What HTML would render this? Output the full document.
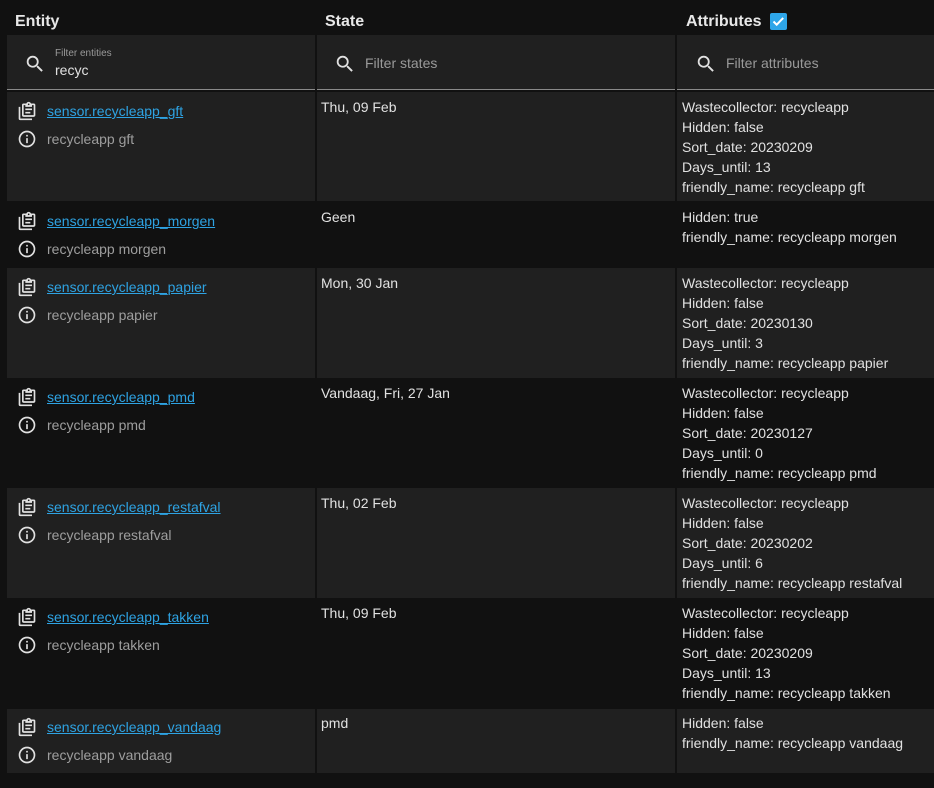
<!DOCTYPE html>
<html><head><meta charset="utf-8"><style>
*{margin:0;padding:0;box-sizing:border-box}
body{width:934px;height:788px;background:#111111;font-family:"Liberation Sans",Roboto,sans-serif;color:#e1e1e1;font-size:14px;position:relative;overflow:hidden}
.h{position:absolute;top:13px;font-weight:bold;font-size:16px;color:#e8e8e8}
.c{position:absolute}
.g{background:#202020}
.fl{position:absolute;top:35px;height:55px;background:#202020;border-bottom:1px solid #8a8a8a}
.ph{position:absolute;top:55px;color:#9a9a9a;font-size:14px}
.si{position:absolute;top:53px}
a{color:#2ea3e3;text-decoration:underline}
.lk{position:absolute;left:47px;font-size:14px}
.sec{position:absolute;left:47px;color:#9e9e9e;font-size:14px}
.st{position:absolute;left:321px;font-size:14px}
.at{position:absolute;left:682px;font-size:14px;line-height:20px}
.ic{position:absolute;left:17px}
</style></head><body>
<div class="h" style="left:15px">Entity</div>
<div class="h" style="left:325px">State</div>
<div class="h" style="left:686px">Attributes</div>
<div style="position:absolute;left:770px;top:13px;width:17px;height:17px;background:#2ea6e9;border-radius:2px"><svg width="17" height="17" viewBox="0 0 17 17"><path d="M3.5 8.5l3.2 3.2 6.5-6.8" stroke="#fff" stroke-width="2" fill="none"/></svg></div>

<div class="fl" style="left:7px;width:308px"></div>
<div class="fl" style="left:317px;width:358px"></div>
<div class="fl" style="left:677px;width:257px"></div>
<svg class="si" style="left:24px" width="22" height="22" viewBox="0 0 24 24"><path fill="#e1e1e1" d="M9.5 3A6.5 6.5 0 0 1 16 9.5c0 1.61-.59 3.09-1.56 4.23l.27.27h.79l5 5-1.5 1.5-5-5v-.79l-.27-.27A6.52 6.52 0 0 1 9.5 16 6.5 6.5 0 0 1 3 9.5 6.5 6.5 0 0 1 9.5 3m0 2C7 5 5 7 5 9.5S7 14 9.5 14 14 12 14 9.5 12 5 9.5 5z"/></svg>
<svg class="si" style="left:334px" width="22" height="22" viewBox="0 0 24 24"><path fill="#e1e1e1" d="M9.5 3A6.5 6.5 0 0 1 16 9.5c0 1.61-.59 3.09-1.56 4.230l.27.27h.79l5 5-1.5 1.5-5-5v-.79l-.27-.27A6.52 6.520 0 0 1 9.5 16 6.5 6.5 0 0 1 3 9.5 6.5 6.5 0 0 1 9.5 3m0 2C7 5 5 7 5 9.5S7 14 9.5 14 14 12 14 9.5 12 5 9.5 5z"/></svg>
<svg class="si" style="left:695px" width="22" height="22" viewBox="0 0 24 24"><path fill="#e1e1e1" d="M9.5 3A6.5 6.5 0 0 1 16 9.5c0 1.61-.59 3.09-1.56 4.23l.27.27h.79l5 5-1.5 1.5-5-5v-.79l-.27-.27A6.52 6.52 0 0 1 9.5 16 6.5 6.5 0 0 1 3 9.5 6.5 6.5 0 0 1 9.5 3m0 2C7 5 5 7 5 9.5S7 14 9.5 14 14 12 14 9.5 12 5 9.5 5z"/></svg>
<div style="position:absolute;left:55px;top:48px;font-size:10px;color:#9a9a9a">Filter entities</div>
<div style="position:absolute;left:55px;top:62px;font-size:14px;color:#e1e1e1">recyc</div>
<div class="ph" style="left:365px">Filter states</div>
<div class="ph" style="left:726px">Filter attributes</div>

<!-- gray rows backgrounds -->
<div class="c g" style="left:7px;top:92px;width:308px;height:109px"></div>
<div class="c g" style="left:317px;top:92px;width:358px;height:109px"></div>
<div class="c g" style="left:677px;top:92px;width:257px;height:109px"></div>
<div class="c g" style="left:7px;top:268px;width:308px;height:110px"></div>
<div class="c g" style="left:317px;top:268px;width:358px;height:110px"></div>
<div class="c g" style="left:677px;top:268px;width:257px;height:110px"></div>
<div class="c g" style="left:7px;top:488px;width:308px;height:110px"></div>
<div class="c g" style="left:317px;top:488px;width:358px;height:110px"></div>
<div class="c g" style="left:677px;top:488px;width:257px;height:110px"></div>
<div class="c g" style="left:7px;top:709px;width:308px;height:64px"></div>
<div class="c g" style="left:317px;top:709px;width:358px;height:64px"></div>
<div class="c g" style="left:677px;top:709px;width:257px;height:64px"></div>

<svg width="0" height="0" style="position:absolute"><defs>
<symbol id="cb" viewBox="0 0 24 24"><path fill="#e1e1e1" d="M4 7v14h14v2H4a2 2 0 0 1-2-2V7h2m16-4a2 2 0 0 1 2 2v12a2 2 0 0 1-2 2H8a2 2 0 0 1-2-2V5a2 2 0 0 1 2-2h3.18C11.6 1.84 12.7 1 14 1s2.4.84 2.82 2H20m-6 0a1 1 0 0 0-1 1 1 1 0 0 0 1 1 1 1 0 0 0 1-1 1 1 0 0 0-1-1m-4 4V5H8v12h12V5h-2v2h-8m0 2h8v2h-8V9m0 4h6v2h-6v-2z"/></symbol>
<symbol id="inf" viewBox="0 0 24 24"><path fill="#e1e1e1" d="M11 9h2V7h-2m1 13c-4.41 0-8-3.59-8-8s3.59-8 8-8 8 3.59 8 8-3.59 8-8 8m0-18A10 10 0 0 0 2 12a10 10 0 0 0 10 10 10 10 0 0 0 10-10A10 10 0 0 0 12 2m-1 15h2v-6h-2v6z"/></symbol>
</defs></svg>

<!-- Row content: top offsets -->
<!-- row1 top 92 -->
<svg class="ic" style="top:101px" width="20" height="20"><use href="#cb"/></svg>
<svg class="ic" style="top:129px" width="20" height="20"><use href="#inf"/></svg>
<a class="lk" style="top:103px">sensor.recycleapp_gft</a>
<div class="sec" style="top:131px">recycleapp gft</div>
<div class="st" style="top:99px">Thu, 09 Feb</div>
<div class="at" style="top:97px">Wastecollector: recycleapp<br>Hidden: false<br>Sort_date: 20230209<br>Days_until: 13<br>friendly_name: recycleapp gft</div>

<svg class="ic" style="top:211px" width="20" height="20"><use href="#cb"/></svg>
<svg class="ic" style="top:239px" width="20" height="20"><use href="#inf"/></svg>
<a class="lk" style="top:213px">sensor.recycleapp_morgen</a>
<div class="sec" style="top:241px">recycleapp morgen</div>
<div class="st" style="top:209px">Geen</div>
<div class="at" style="top:207px">Hidden: true<br>friendly_name: recycleapp morgen</div>

<svg class="ic" style="top:277px" width="20" height="20"><use href="#cb"/></svg>
<svg class="ic" style="top:305px" width="20" height="20"><use href="#inf"/></svg>
<a class="lk" style="top:279px">sensor.recycleapp_papier</a>
<div class="sec" style="top:307px">recycleapp papier</div>
<div class="st" style="top:275px">Mon, 30 Jan</div>
<div class="at" style="top:273px">Wastecollector: recycleapp<br>Hidden: false<br>Sort_date: 20230130<br>Days_until: 3<br>friendly_name: recycleapp papier</div>

<svg class="ic" style="top:387px" width="20" height="20"><use href="#cb"/></svg>
<svg class="ic" style="top:415px" width="20" height="20"><use href="#inf"/></svg>
<a class="lk" style="top:389px">sensor.recycleapp_pmd</a>
<div class="sec" style="top:417px">recycleapp pmd</div>
<div class="st" style="top:385px">Vandaag, Fri, 27 Jan</div>
<div class="at" style="top:383px">Wastecollector: recycleapp<br>Hidden: false<br>Sort_date: 20230127<br>Days_until: 0<br>friendly_name: recycleapp pmd</div>

<svg class="ic" style="top:497px" width="20" height="20"><use href="#cb"/></svg>
<svg class="ic" style="top:525px" width="20" height="20"><use href="#inf"/></svg>
<a class="lk" style="top:499px">sensor.recycleapp_restafval</a>
<div class="sec" style="top:527px">recycleapp restafval</div>
<div class="st" style="top:495px">Thu, 02 Feb</div>
<div class="at" style="top:493px">Wastecollector: recycleapp<br>Hidden: false<br>Sort_date: 20230202<br>Days_until: 6<br>friendly_name: recycleapp restafval</div>

<svg class="ic" style="top:607px" width="20" height="20"><use href="#cb"/></svg>
<svg class="ic" style="top:635px" width="20" height="20"><use href="#inf"/></svg>
<a class="lk" style="top:609px">sensor.recycleapp_takken</a>
<div class="sec" style="top:637px">recycleapp takken</div>
<div class="st" style="top:605px">Thu, 09 Feb</div>
<div class="at" style="top:603px">Wastecollector: recycleapp<br>Hidden: false<br>Sort_date: 20230209<br>Days_until: 13<br>friendly_name: recycleapp takken</div>

<svg class="ic" style="top:717px" width="20" height="20"><use href="#cb"/></svg>
<svg class="ic" style="top:745px" width="20" height="20"><use href="#inf"/></svg>
<a class="lk" style="top:719px">sensor.recycleapp_vandaag</a>
<div class="sec" style="top:747px">recycleapp vandaag</div>
<div class="st" style="top:715px">pmd</div>
<div class="at" style="top:713px">Hidden: false<br>friendly_name: recycleapp vandaag</div>
</body></html>
